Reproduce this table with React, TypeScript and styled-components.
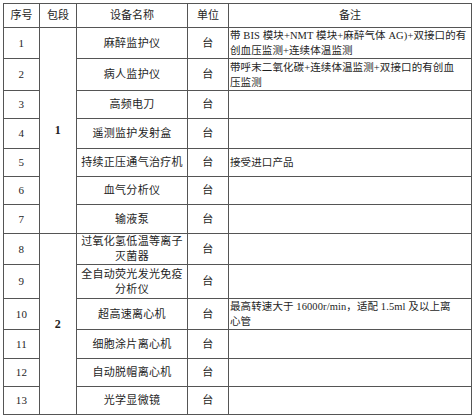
import styled, { createGlobalStyle } from "styled-components";

const Global = createGlobalStyle`
  body {
    margin: 0;
    background: #ffffff;
  }
`;

const Page = styled.div`
  padding: 3px 0 0 3px;
`;

const Table = styled.table`
  border-collapse: collapse;
  table-layout: fixed;
  width: 468px;
  font-family: "Liberation Serif", "Noto Sans CJK SC", serif;
  font-size: 11px;
  color: #1e1e1e;
  border: 1px solid #3a3a3a;
`;

const Row = styled.tr<{ $h: number }>`
  height: ${(p) => p.$h}px;
`;

const HeadCell = styled.th`
  border: 1px solid #555;
  font-weight: normal;
  text-align: center;
  padding: 0;
  font-size: 11px;
  line-height: 15px;
`;

const Cell = styled.td<{ $bold?: boolean }>`
  border: 1px solid #555;
  padding: 0 4px;
  text-align: center;
  vertical-align: middle;
  line-height: 15px;
  font-weight: ${(p) => (p.$bold ? "bold" : "normal")};
  font-size: ${(p) => (p.$bold ? "12px" : "11px")};
  letter-spacing: 0.3px;
`;

const NoteCell = styled.td`
  border: 1px solid #555;
  padding: 0 0 0 1px;
  text-align: left;
  vertical-align: middle;
  line-height: 15px;
  font-family: "Liberation Serif", "Noto Sans CJK SC", serif;
  font-size: 10.5px;
  letter-spacing: 0.1px;
  white-space: nowrap;
  overflow: hidden;
`;

type Item = { name: string; note?: string[]; h: number };

const group1: Item[] = [
  { name: "麻醉监护仪", note: ["带 BIS 模块+NMT 模块+麻醉气体 AG)+双接口的有", "创血压监测+连续体温监测"], h: 31 },
  { name: "病人监护仪", note: ["带呼末二氧化碳+连续体温监测+双接口的有创血", "压监测"], h: 32 },
  { name: "高频电刀", h: 28 },
  { name: "遥测监护发射盒", h: 30 },
  { name: "持续正压通气治疗机", note: ["接受进口产品"], h: 28 },
  { name: "血气分析仪", h: 28 },
  { name: "输液泵", h: 29 },
];

const group2: Item[] = [
  { name: "过氧化氢低温等离子灭菌器", h: 30 },
  { name: "全自动荧光发光免疫分析仪", h: 34 },
  { name: "超高速离心机", note: ["最高转速大于 16000r/min，适配 1.5ml 及以上离", "心管"], h: 30 },
  { name: "细胞涂片离心机", h: 29 },
  { name: "自动脱帽离心机", h: 28 },
  { name: "光学显微镜", h: 28 },
];

function Note({ lines }: { lines?: string[] }) {
  if (!lines) return null;
  return (
    <>
      {lines.map((l, i) => (
        <span key={i}>
          {i > 0 && <br />}
          {l}
        </span>
      ))}
    </>
  );
}

function Group({ items, start, label }: { items: Item[]; start: number; label: string }) {
  return (
    <>
      {items.map((it, i) => (
        <Row key={it.name} $h={it.h}>
          <Cell>{start + i}</Cell>
          {i === 0 && (
            <Cell $bold rowSpan={items.length}>
              {label}
            </Cell>
          )}
          <Cell>{it.name}</Cell>
          <Cell>台</Cell>
          <NoteCell>
            <Note lines={it.note} />
          </NoteCell>
        </Row>
      ))}
    </>
  );
}

export default function App() {
  return (
    <>
      <Global />
      <Page>
        <Table>
          <colgroup>
            <col style={{ width: 36 }} />
            <col style={{ width: 37 }} />
            <col style={{ width: 111 }} />
            <col style={{ width: 41 }} />
            <col style={{ width: 243 }} />
          </colgroup>
          <thead>
            <Row $h={24}>
              <HeadCell>序号</HeadCell>
              <HeadCell>包段</HeadCell>
              <HeadCell>设备名称</HeadCell>
              <HeadCell>单位</HeadCell>
              <HeadCell>备注</HeadCell>
            </Row>
          </thead>
          <tbody>
            <Group items={group1} start={1} label="1" />
            <Group items={group2} start={8} label="2" />
          </tbody>
        </Table>
      </Page>
    </>
  );
}
